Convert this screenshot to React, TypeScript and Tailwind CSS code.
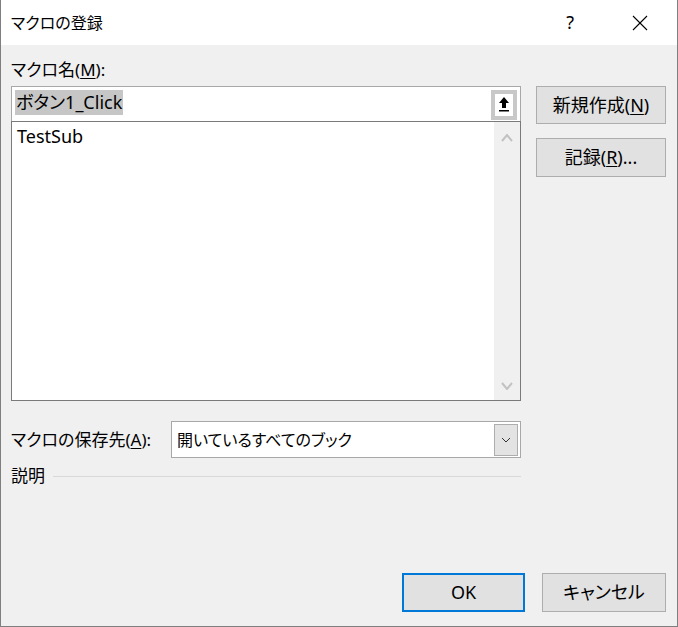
const font = {
  fontFamily: '"Noto Sans", "Noto Sans CJK JP", sans-serif',
};

function UpArrowIcon() {
  return (
    <svg width="12" height="17" viewBox="0 0 12 17">
      <polygon points="6,1 11,7 8,7 8,12 4,12 4,7 1,7" fill="#000" />
      <rect x="1" y="14" width="10" height="1.5" fill="#000" />
    </svg>
  );
}

function Chevron({ dir, color, w = 12, h = 8, sw = 2 }: { dir: "up" | "down"; color: string; w?: number; h?: number; sw?: number }) {
  const pts = dir === "up" ? `1,${h - 1} ${w / 2},1 ${w - 1},${h - 1}` : `1,1 ${w / 2},${h - 1} ${w - 1},1`;
  return (
    <svg width={w} height={h} viewBox={`0 0 ${w} ${h}`}>
      <polyline points={pts} fill="none" stroke={color} strokeWidth={sw} />
    </svg>
  );
}

function DialogButton({ children, primary, className = "" }: { children: React.ReactNode; primary?: boolean; className?: string }) {
  return (
    <button
      className={
        "flex items-center justify-center bg-[#e1e1e1] text-[18px] text-black " +
        (primary ? "border-2 border-[#0078d7] " : "border border-[#adadad] ") +
        className
      }
    >
      {children}
    </button>
  );
}

export default function App() {
  return (
    <div
      style={font}
      className="w-[678px] h-[627px] flex flex-col bg-[#f0f0f0] border-l border-r border-b border-[#7f7f7f] text-black [font-feature-settings:'palt'] select-none"
    >
      {/* Title bar */}
      <div className="h-[45px] bg-white flex items-center pl-[10px] pr-[29px]">
        <span className="text-[16px] flex-1">マクロの登録</span>
        <span className="text-[18px] mr-[58px]">?</span>
        <svg width="16" height="16" viewBox="0 0 16 16">
          <line x1="1" y1="1" x2="15" y2="15" stroke="#000" strokeWidth="1.1" />
          <line x1="15" y1="1" x2="1" y2="15" stroke="#000" strokeWidth="1.1" />
        </svg>
      </div>

      {/* Body */}
      <div className="flex-1 flex flex-col pl-[10px] pr-[11px] pt-[13px] pb-[14px]">
        <div className="flex">
          {/* Left column */}
          <div className="w-[510px] flex flex-col">
            <div className="h-[24px] leading-[24px] text-[17px] mb-[4px]">
              マクロ名(<span className="underline underline-offset-2">M</span>):
            </div>

            <div className="h-[35px] bg-white border border-b-0 border-[#a8a8a8] flex items-center pl-[3px] pr-[3px]">
              <span className="bg-[#c6c6c6] text-[18px] leading-[25px] px-[1px] mb-[4px]">ボタン1_Click</span>
              <div className="flex-1" />
              <div className="w-[26px] h-[30px] border-[4px] border-[#c8c8c8] bg-white flex items-center justify-center mt-[1px]">
                <UpArrowIcon />
              </div>
            </div>

            <div className="h-[280px] bg-white border border-[#7a7a7a] flex">
              <div className="flex-1 pl-[5px] pt-[2px] text-[18px] leading-[25px]">TestSub</div>
              <div className="w-[26px] bg-[#f0f0f0] flex flex-col items-center justify-between pt-[12px] pb-[10px]">
                <Chevron dir="up" color="#c2c2c2" />
                <Chevron dir="down" color="#c2c2c2" />
              </div>
            </div>

            <div className="flex items-center mt-[20px]">
              <div className="w-[160px] text-[17px]">
                マクロの保存先(<span className="underline underline-offset-2">A</span>):
              </div>
              <div className="flex-1 h-[37px] bg-white border border-[#a8a8a8] flex items-center pl-[5px] pr-[2px]">
                <span className="flex-1 text-[16px]">開いているすべてのブック</span>
                <div className="w-[24px] h-[32px] bg-[#e3e3e3] border border-[#adadad] flex items-center justify-center">
                  <Chevron dir="down" color="#333" w={10} h={6} sw={1} />
                </div>
              </div>
            </div>

            <div className="flex items-center h-[24px] mt-[6px]">
              <span className="text-[17px] mr-[8px]">説明</span>
              <div className="flex-1 h-px bg-[#d8d8d8]" />
            </div>
          </div>

          {/* Right column */}
          <div className="w-[130px] ml-[15px] pt-[28px] flex flex-col gap-[14px]">
            <DialogButton className="h-[38px]">
              新規作成(<span className="underline underline-offset-2">N</span>)
            </DialogButton>
            <DialogButton className="h-[39px]">
              記録(<span className="underline underline-offset-2">R</span>)...
            </DialogButton>
          </div>
        </div>

        <div className="mt-auto flex justify-end gap-[17px]">
          <DialogButton primary className="w-[123px] h-[39px]">
            OK
          </DialogButton>
          <DialogButton className="w-[124px] h-[39px]">キャンセル</DialogButton>
        </div>
      </div>
    </div>
  );
}
